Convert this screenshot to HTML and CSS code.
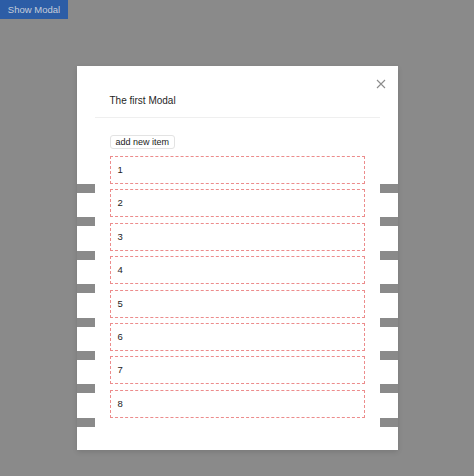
FILE: index.html
```html
<!DOCTYPE html>
<html>
<head>
    <title>Modal</title>
    <link rel="stylesheet" href="styles.css">
</head>
<body>
    <button class="show-btn">Show Modal</button>

    <div class="mask">
        <div class="modal">
            <div class="modal-close">
                <svg width="10" height="10" viewBox="0 0 10 10">
                    <path d="M1 1 L9 9 M9 1 L1 9" stroke="#8c8c8c" stroke-width="1.1" fill="none"/>
                </svg>
            </div>
            <div class="modal-header">The first Modal</div>
            <div class="modal-body">
                <button class="add-btn">add new item</button>
                <div class="item-list">
                    <div class="item">1</div>
                    <div class="item">2</div>
                    <div class="item">3</div>
                    <div class="item">4</div>
                    <div class="item">5</div>
                    <div class="item">6</div>
                    <div class="item">7</div>
                    <div class="item">8</div>
                </div>
            </div>
        </div>
    </div>
</body>
</html>
```

FILE: styles.css
```css
body {
    margin: 0;
    padding: 0;
    font-family: "Liberation Sans", Arial, sans-serif;
    background-color: #8a8a8a;
    width: 474px;
    height: 476px;
    overflow: hidden;
}

.show-btn {
    display: block;
    margin: 0;
    height: 19px;
    width: 68px;
    padding: 0;
    border: none;
    background-color: #2c5da6;
    color: #c5cdda;
    font-family: "Liberation Sans", Arial, sans-serif;
    font-size: 9.5px;
}

.mask {
    display: flex;
    justify-content: center;
    padding-top: 47px;
}

.modal {
    position: relative;
    width: 285px;
    padding: 0 18px 32px;
    background-color: #ffffff;
    box-shadow: 0 2px 5px rgba(0, 0, 0, 0.12);
}

.modal-close {
    position: absolute;
    top: 13px;
    right: 12px;
    width: 10px;
    height: 10px;
}

.modal-close svg {
    display: block;
}

.modal-header {
    padding: 29px 15px 11px;
    font-size: 10px;
    color: #1f1f1f;
    border-bottom: 1px solid #efefef;
}

.modal-body {
    padding: 17px 15px 0;
}

.add-btn {
    display: block;
    height: 14px;
    padding: 0 5px;
    margin: 0 0 7px;
    border: 1px solid #e3e3e3;
    border-radius: 3px;
    background-color: #ffffff;
    color: #222222;
    font-family: "Liberation Sans", Arial, sans-serif;
    font-size: 9px;
    line-height: 12px;
}

.item-list {
    display: flex;
    flex-direction: column;
    gap: 5.4px;
}

.item {
    position: relative;
    height: 26px;
    line-height: 26px;
    padding-left: 7px;
    border: 1px dashed #ec8c8c;
    font-size: 9.5px;
    color: #222222;
}

/* gaps cut into the modal edges */
.item::before,
.item::after {
    content: "";
    position: absolute;
    top: 27px;
    width: 18px;
    height: 9px;
    background-color: #8a8a8a;
}

.item::before {
    left: -34px;
}

.item::after {
    right: -34px;
}
```
